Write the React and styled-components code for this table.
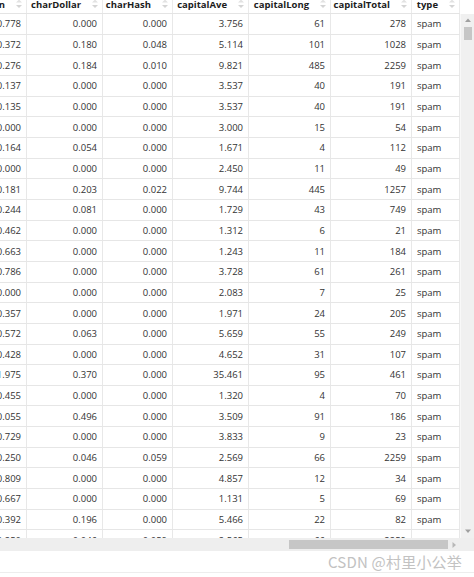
import styled, { createGlobalStyle } from "styled-components"

const GlobalStyle = createGlobalStyle`
  html, body {
    margin: 0;
    padding: 0;
    background: #ffffff;
  }
  body {
    font-family: "Open Sans", "Noto Sans", sans-serif;
  }
`

const columns = [
  { key: "charExclamation", width: 27, align: "right" },
  { key: "charDollar", width: 76, align: "right" },
  { key: "charHash", width: 70, align: "right" },
  { key: "capitalAve", width: 76, align: "right" },
  { key: "capitalLong", width: 82, align: "right" },
  { key: "capitalTotal", width: 81, align: "right" },
  { key: "type", width: 48, align: "left" },
]

const rows = [
  ["0.778", "0.000", "0.000", "3.756", "61", "278"],
  ["0.372", "0.180", "0.048", "5.114", "101", "1028"],
  ["0.276", "0.184", "0.010", "9.821", "485", "2259"],
  ["0.137", "0.000", "0.000", "3.537", "40", "191"],
  ["0.135", "0.000", "0.000", "3.537", "40", "191"],
  ["0.000", "0.000", "0.000", "3.000", "15", "54"],
  ["0.164", "0.054", "0.000", "1.671", "4", "112"],
  ["0.000", "0.000", "0.000", "2.450", "11", "49"],
  ["0.181", "0.203", "0.022", "9.744", "445", "1257"],
  ["0.244", "0.081", "0.000", "1.729", "43", "749"],
  ["0.462", "0.000", "0.000", "1.312", "6", "21"],
  ["0.663", "0.000", "0.000", "1.243", "11", "184"],
  ["0.786", "0.000", "0.000", "3.728", "61", "261"],
  ["0.000", "0.000", "0.000", "2.083", "7", "25"],
  ["0.357", "0.000", "0.000", "1.971", "24", "205"],
  ["0.572", "0.063", "0.000", "5.659", "55", "249"],
  ["0.428", "0.000", "0.000", "4.652", "31", "107"],
  ["1.975", "0.370", "0.000", "35.461", "95", "461"],
  ["0.455", "0.000", "0.000", "1.320", "4", "70"],
  ["0.055", "0.496", "0.000", "3.509", "91", "186"],
  ["0.729", "0.000", "0.000", "3.833", "9", "23"],
  ["0.250", "0.046", "0.059", "2.569", "66", "2259"],
  ["0.809", "0.000", "0.000", "4.857", "12", "34"],
  ["0.667", "0.000", "0.000", "1.131", "5", "69"],
  ["0.392", "0.196", "0.000", "5.466", "22", "82"],
  ["0.250", "0.046", "0.059", "2.565", "66", "2259"],
].map((r) => [...r, "spam"])

const gridTemplate = columns.map((c) => `${c.width}px`).join(" ")

function SortIcon() {
  return (
    <svg width="6" height="10" viewBox="0 0 6 10">
      <path d="M0 3.5 L3 0.5 L6 3.5 Z" fill="#e2e2e2" />
      <path d="M0 6 L3 9 L6 6 Z" fill="#d4d4d4" />
    </svg>
  )
}

function Arrow({ dir }) {
  const d = {
    up: "M0 4 L3 0.5 L6 4 Z",
    down: "M0 0.5 L3 4 L6 0.5 Z",
    right: "M0.5 0 L4 3 L0.5 6 Z",
  }[dir]
  return (
    <svg width="6" height="6" viewBox="0 0 6 6">
      <path d={d} fill={dir === "right" ? "#b8b8b8" : "#a0a0a0"} />
    </svg>
  )
}

export default function App() {
  return (
    <Styled.Page>
      <GlobalStyle />
      <Styled.Main>
        <Styled.Viewport>
          <Styled.HeaderRow $template={gridTemplate}>
            {columns.map((c) => (
              <Styled.HeadCell key={c.key}>
                <Styled.Label>{c.key}</Styled.Label>
                <SortIcon />
              </Styled.HeadCell>
            ))}
          </Styled.HeaderRow>
          {rows.map((r, i) => (
            <Styled.Row key={i} $template={gridTemplate}>
              {r.map((v, j) => (
                <Styled.Cell key={j} $align={columns[j].align}>
                  {v}
                </Styled.Cell>
              ))}
            </Styled.Row>
          ))}
        </Styled.Viewport>
        <Styled.VScroll>
          <Styled.VCap />
          <Styled.VTrack>
            <Styled.ArrowButton><Arrow dir="up" /></Styled.ArrowButton>
            <Styled.VThumb />
            <Styled.Spacer />
            <Styled.ArrowButton><Arrow dir="down" /></Styled.ArrowButton>
          </Styled.VTrack>
        </Styled.VScroll>
      </Styled.Main>
      <Styled.HScroll>
        <Styled.HTrack>
          <Styled.HThumb />
          <Styled.ArrowButton><Arrow dir="right" /></Styled.ArrowButton>
        </Styled.HTrack>
        <Styled.Corner />
      </Styled.HScroll>
      <Styled.Footer>
        <Styled.Watermark>CSDN @村里小公举</Styled.Watermark>
      </Styled.Footer>
    </Styled.Page>
  )
}

const Styled = {
  Page: styled("div")`
    width: 474px;
    height: 577px;
    display: grid;
    grid-template-rows: 538px 13px 26px;
    overflow: hidden;
    background: #ffffff;
  `,

  Main: styled("div")`
    display: flex;
    min-height: 0;
  `,

  Viewport: styled("div")`
    flex: 1;
    overflow: hidden;
    font-size: 9.5px;
  `,

  HeaderRow: styled("div")`
    display: grid;
    grid-template-columns: ${(p) => p.$template};
    height: 14px;
    border-bottom: 1px solid #e4e4e4;
    box-sizing: border-box;
  `,

  HeadCell: styled("div")`
    display: flex;
    justify-content: flex-end;
    align-items: flex-start;
    padding-right: 4px;
    overflow: hidden;
    border-right: 1px solid #ebebeb;
    box-sizing: border-box;
    font-weight: 700;
    color: #1c1c1c;
    line-height: 10px;

    svg {
      flex: none;
      margin-left: 11px;
      margin-top: -1px;
    }
  `,

  Label: styled("span")`
    flex: 1 0 auto;
    padding-left: 5px;
    white-space: nowrap;
  `,

  Row: styled("div")`
    display: grid;
    grid-template-columns: ${(p) => p.$template};
    height: 20.67px;
    border-bottom: 1px solid #e6e6e6;
    box-sizing: border-box;
  `,

  Cell: styled("div")`
    display: flex;
    align-items: center;
    justify-content: ${(p) => (p.$align === "left" ? "flex-start" : "flex-end")};
    padding: 0 5px;
    overflow: hidden;
    white-space: nowrap;
    color: #333333;
    border-right: 1px solid #e8e8e8;
    box-sizing: border-box;
  `,

  VScroll: styled("div")`
    width: 14px;
    display: flex;
    flex-direction: column;
  `,

  VCap: styled("div")`
    height: 14px;
    flex: none;
    background: #ffffff;
  `,

  VTrack: styled("div")`
    flex: 1;
    display: flex;
    flex-direction: column;
    align-items: center;
    background: #f0f0f0;
    border-left: 1px solid #f8f8f8;
  `,

  ArrowButton: styled("div")`
    width: 13px;
    height: 13px;
    flex: none;
    display: flex;
    align-items: center;
    justify-content: center;
  `,

  VThumb: styled("div")`
    width: 8px;
    height: 13px;
    background: #c6c6c6;
  `,

  Spacer: styled("div")`
    flex: 1;
  `,

  HScroll: styled("div")`
    display: flex;
  `,

  HTrack: styled("div")`
    flex: 1;
    display: flex;
    align-items: center;
    justify-content: flex-end;
    background: #eeeeee;
  `,

  HThumb: styled("div")`
    width: 159px;
    height: 9px;
    background: #c6c6c6;
  `,

  Corner: styled("div")`
    width: 13px;
    background: #eeeeee;
  `,

  Footer: styled("div")`
    display: flex;
    align-items: center;
    justify-content: flex-end;
    padding-right: 12px;
    border-bottom: 1px solid #ededed;
    margin-bottom: 4px;
    background: #ffffff;
  `,

  Watermark: styled("span")`
    font-family: "Noto Sans CJK SC", "Noto Sans", sans-serif;
    font-size: 15px;
    color: #c2c2c2;
    letter-spacing: 0.2px;
  `,
}
